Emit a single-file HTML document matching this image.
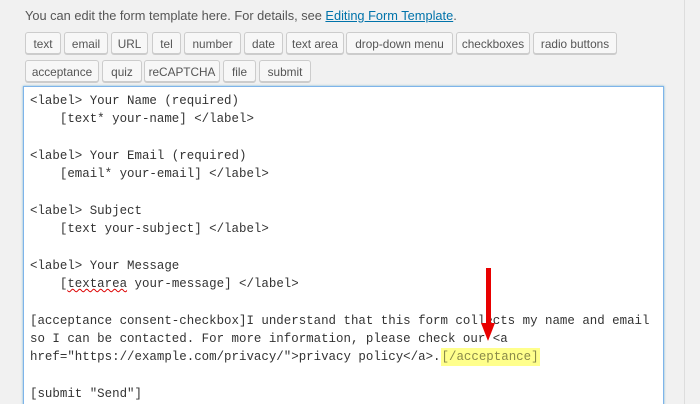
<!DOCTYPE html>
<html style="overflow:hidden;height:404px"><head><style>
body{margin:0;width:700px;height:404px;background:#f1f1f1;position:relative;overflow:hidden;font-family:"Liberation Sans",sans-serif}
.rline{position:absolute;left:684px;top:0;width:1px;height:404px;background:#ddd}
.intro{position:absolute;left:25px;top:8px;font-size:12.8px;color:#555}
.intro a{color:#0073aa;text-decoration:underline}
.b{position:absolute;height:22px;border:1px solid #ccc;border-radius:3px;background:#f7f7f7;color:#555;font-size:11.8px;line-height:23px;text-align:center;box-sizing:border-box;box-shadow:0 1px 0 #ccc}
.ta{position:absolute;left:23px;top:86px;width:639px;height:330px;background:#fff;border:1px solid #7eb4ea;box-shadow:0 0 2px rgba(30,140,190,.6)}
pre{position:absolute;left:30px;top:92px;margin:0;font-family:"Liberation Mono",monospace;font-size:12.45px;line-height:18.3px;color:#333}
.sp{text-decoration:underline wavy #d00;text-decoration-thickness:1px}
.hl{background:#ffff8c;color:#8a8a4a;padding:2px 1px}
.shaft{position:absolute;left:486px;top:268px;width:5px;height:58px;background:#e80000}
.head{position:absolute;left:481px;top:323px;width:0;height:0;border-left:7.5px solid transparent;border-right:7.5px solid transparent;border-top:18px solid #e80000}
</style></head><body>
<div class="rline"></div>
<div class="intro">You can edit the form template here. For details, see <a>Editing Form Template</a>.</div>
<div class="b" style="left:25px;top:32px;width:36px">text</div>
<div class="b" style="left:64px;top:32px;width:44px">email</div>
<div class="b" style="left:111px;top:32px;width:37px">URL</div>
<div class="b" style="left:152px;top:32px;width:29px">tel</div>
<div class="b" style="left:184px;top:32px;width:57px">number</div>
<div class="b" style="left:244px;top:32px;width:39px">date</div>
<div class="b" style="left:286px;top:32px;width:58px">text area</div>
<div class="b" style="left:346px;top:32px;width:107px">drop-down menu</div>
<div class="b" style="left:456px;top:32px;width:74px">checkboxes</div>
<div class="b" style="left:533px;top:32px;width:84px">radio buttons</div>
<div class="b" style="left:25px;top:60px;width:74px">acceptance</div>
<div class="b" style="left:102px;top:60px;width:40px">quiz</div>
<div class="b" style="left:144px;top:60px;width:76px">reCAPTCHA</div>
<div class="b" style="left:223px;top:60px;width:33px">file</div>
<div class="b" style="left:259px;top:60px;width:52px">submit</div>
<div class="ta"></div>
<pre>&lt;label&gt; Your Name (required)
    [text* your-name] &lt;/label&gt;

&lt;label&gt; Your Email (required)
    [email* your-email] &lt;/label&gt;

&lt;label&gt; Subject
    [text your-subject] &lt;/label&gt;

&lt;label&gt; Your Message
    [<span class="sp">textarea</span> your-message] &lt;/label&gt;

[acceptance consent-checkbox]I understand that this form collects my name and email
so I can be contacted. For more information, please check our &lt;a
href="https://example.com/privacy/"&gt;privacy policy&lt;/a&gt;.<span class="hl">[/acceptance]</span>

[submit "Send"]</pre>
<div class="shaft"></div><div class="head"></div>
</body></html>
